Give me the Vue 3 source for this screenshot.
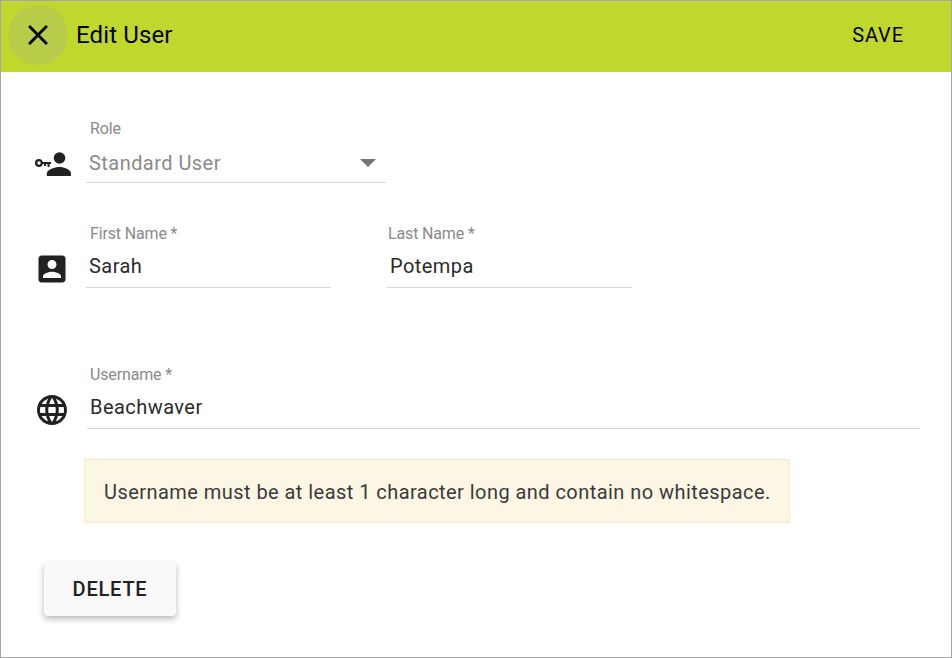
<script setup>
const user = {
  role: 'Standard User',
  firstName: 'Sarah',
  lastName: 'Potempa',
  username: 'Beachwaver'
};
</script>

<template>
  <div class="dialog">
    <header class="toolbar">
      <button class="close-btn" aria-label="Close">
        <svg viewBox="0 0 24 24" width="34" height="34"><path d="M19 6.41 17.59 5 12 10.59 6.41 5 5 6.41 10.59 12 5 17.59 6.41 19 12 13.41 17.59 19 19 17.59 13.41 12z" /></svg>
      </button>
      <span class="title">Edit User</span>
      <button class="save-btn">SAVE</button>
    </header>

    <main class="content">
      <div class="row row-role">
        <svg class="icon" viewBox="0 0 36 24" width="36" height="24">
          <circle cx="24.5" cy="6" r="5.8" />
          <path d="M11.800 24v-2.500c0-4 8.200-6.500 12.700-6.500s11.500 2.500 11.500 6.500V24z" />
          <path fill-rule="evenodd" d="M4 7a4 4 0 0 1 3.800 3H16v2h-1.500v3h-2v-3h-1.500v2h-2v-2H7.800A4 4 0 1 1 4 7zm0 2.300a1.700 1.700 0 1 0 0 3.400 1.700 1.700 0 0 0 0-3.400z" />
        </svg>
        <div class="field field-role">
          <label>Role</label>
          <div class="value">
            {{ user.role }}
            <span class="caret"></span>
          </div>
        </div>
      </div>

      <div class="row row-name">
        <svg class="icon" viewBox="0 0 24 24" width="36" height="36"><path d="M3 5v14c0 1.100.89 2 2 2h14c1.100 0 2-.9 2-2V5c0-1.100-.9-2-2-2H5c-1.110 0-2 .9-2 2zm12 4c0 1.660-1.340 3-3 3s-3-1.340-3-3 1.340-3 3-3 3 1.340 3 3zm-9 8c0-2 4-3.100 6-3.100s6 1.100 6 3.100v1H6v-1z" /></svg>
        <div class="field field-name">
          <label>First Name *</label>
          <div class="value">{{ user.firstName }}</div>
        </div>
        <div class="field field-name">
          <label>Last Name *</label>
          <div class="value">{{ user.lastName }}</div>
        </div>
      </div>

      <div class="row row-username">
        <svg class="icon" viewBox="0 0 24 24" width="36" height="36"><path d="M11.990 2C6.470 2 2 6.480 2 12s4.470 10 9.990 10C17.520 22 22 17.520 22 12S17.520 2 11.990 2zm6.930 6h-2.950c-.32-1.250-.78-2.450-1.380-3.560 1.840.63 3.370 1.910 4.330 3.560zM12 4.040c.83 1.200 1.480 2.530 1.910 3.960h-3.820c.43-1.430 1.080-2.760 1.910-3.960zM4.260 14C4.100 13.360 4 12.690 4 12s.1-1.360.26-2h3.380c-.08.66-.14 1.320-.14 2s.06 1.340.14 2H4.260zm.82 2h2.950c.32 1.250.78 2.450 1.380 3.560-1.840-.63-3.370-1.900-4.330-3.560zm2.950-8H5.080c.96-1.660 2.490-2.930 4.330-3.560C8.810 5.550 8.350 6.750 8.030 8zM12 19.960c-.83-1.200-1.480-2.530-1.910-3.960h3.820c-.43 1.430-1.080 2.760-1.910 3.960zM14.340 14H9.660c-.09-.66-.16-1.320-.16-2s.07-1.350.16-2h4.680c.09.65.16 1.320.16 2s-.07 1.340-.16 2zm.25 5.560c.6-1.110 1.060-2.310 1.380-3.560h2.950c-.96 1.650-2.490 2.930-4.330 3.560zM16.360 14c.08-.66.14-1.320.14-2s-.06-1.340-.14-2h3.380c.16.640.26 1.310.26 2s-.1 1.360-.26 2h-3.380z" /></svg>
        <div class="field field-username">
          <label>Username *</label>
          <div class="value">{{ user.username }}</div>
        </div>
      </div>

      <div class="notice">Username must be at least 1 character long and contain no whitespace.</div>

      <button class="delete-btn">DELETE</button>
    </main>
  </div>
</template>

<style>
html, body { margin: 0; background: #fff; }
</style>

<style scoped>
.dialog {
  box-sizing: border-box;
  width: 952px;
  height: 658px;
  border: 1px solid #a6a6a6;
  background: #fff;
  font-family: Roboto, "Liberation Sans", sans-serif;
  color: #212121;
  overflow: hidden;
}

.toolbar {
  display: flex;
  align-items: center;
  height: 71px;
  padding-left: 7px;
  padding-right: 47px;
  background: #c0d72d;
  color: #000;
}
.close-btn {
  display: flex;
  align-items: center;
  justify-content: center;
  width: 60px;
  height: 60px;
  margin-top: -3px;
  padding: 0;
  border: none;
  border-radius: 50%;
  background: #b9cc49;
  cursor: pointer;
}
.close-btn svg { fill: #000; }
.title { margin-left: 8px; margin-top: -4px; font-size: 24px; letter-spacing: 0.12px; }
.save-btn {
  margin-left: auto;
  margin-top: -3px;
  padding: 0;
  border: none;
  background: none;
  color: #000;
  font-family: inherit;
  font-size: 20px;
  letter-spacing: 0.9px;
  cursor: pointer;
}

.content { padding-top: 47px; padding-left: 33px; }

.row { display: flex; align-items: flex-end; }
.icon { flex: none; fill: #212121; }

.row-role .icon { margin-left: 1px; margin-bottom: 7px; margin-right: 15px; }
.row-name { margin-top: 41px; }
.row-name .icon { margin-bottom: 1px; margin-right: 16px; }
.row-name .field + .field { margin-left: 56px; }
.row-name .field + .field label { padding-left: 1px; }
.row-username { margin-top: 77px; }
.row-username .icon { margin-bottom: 1px; margin-right: 17px; }

.field { display: flex; flex-direction: column; }
.field label {
  padding-left: 4px;
  margin-bottom: 3px;
  font-size: 16px;
  line-height: 19px;
  letter-spacing: -0.15px;
  color: #8a8a8a;
}
.field-username label { padding-left: 3px; }
.value {
  display: flex;
  align-items: center;
  justify-content: space-between;
  height: 42px;
  padding-left: 3px;
  padding-bottom: 2px;
  box-sizing: border-box;
  border-bottom: 1px solid #d6d6d6;
  color: #2b2b2b;
  font-size: 20px;
  letter-spacing: 0.45px;
}
.field-role label { margin-bottom: 7px; }
.field-role .value { height: 38px; color: #8a8a8a; padding-right: 10px; }
.caret {
  width: 0;
  height: 0;
  border-left: 8px solid transparent;
  border-right: 8px solid transparent;
  border-top: 8px solid #757575;
}
.field-role { width: 300px; }
.field-name { width: 245px; }
.field-username { width: 833px; }

.notice {
  box-sizing: border-box;
  width: 706px;
  height: 64px;
  margin-top: 30px;
  margin-left: 50px;
  padding-left: 19px;
  border: 1px solid #f8ebcd;
  background: #fcf6e5;
  color: #3a3a3a;
  font-size: 20px;
  line-height: 64px;
  letter-spacing: 0.45px;
  white-space: nowrap;
}

.delete-btn {
  display: block;
  width: 132px;
  height: 54px;
  margin-top: 39px;
  margin-left: 10px;
  padding: 0;
  border: none;
  border-radius: 4px;
  background: #f9f9f9;
  box-shadow: 0 3px 6px rgba(0, 0, 0, 0.28);
  color: #212121;
  font-family: inherit;
  font-size: 20px;
  font-weight: 500;
  letter-spacing: 0.8px;
  cursor: pointer;
}
</style>
